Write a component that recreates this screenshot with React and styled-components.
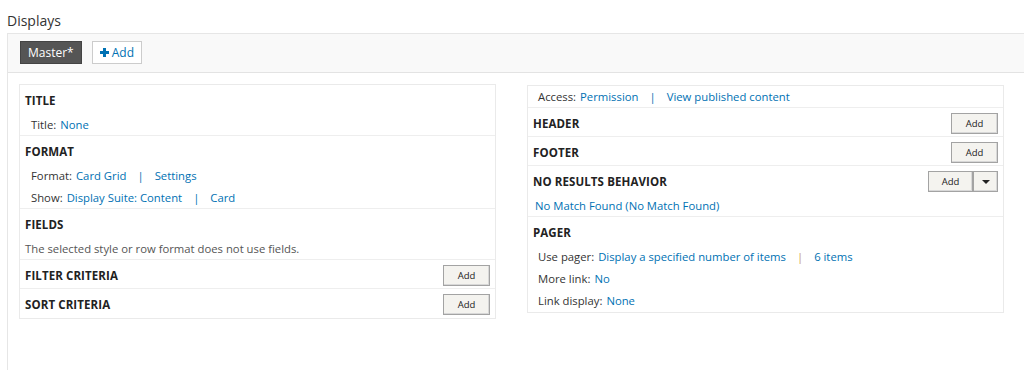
import React from "react";
import styled, { createGlobalStyle } from "styled-components";

const Global = createGlobalStyle`
  html, body { margin: 0; padding: 0; background: #fff; overflow: hidden; }
  body { font-family: "Open Sans", "Noto Sans", sans-serif; color: #333; width: 1024px; height: 370px; }
  * { box-sizing: border-box; }
`;

const Page = styled.div`
  padding: 12px 0 0 7px;
`;

const PageTitle = styled.h2`
  margin: 0 0 4px 0;
  font-size: 14px;
  font-weight: 400;
  line-height: 17px;
  color: #333;
`;

const Wrapper = styled.div`
  width: 1040px;
  height: 400px;
  border: 1px solid #e6e6e6;
  border-right: none;
`;

const TabBar = styled.div`
  background: #f9f9f9;
  border-bottom: 1px solid #e3e3e3;
  height: 39px;
  padding: 7px 0 0 12px;
  display: flex;
  gap: 10px;
  align-items: flex-start;
`;

const Tab = styled.div`
  height: 23px;
  padding: 0 7px;
  display: flex;
  align-items: center;
  font-size: 12px;
  background: ${(p) => (p.$active ? "#555" : "#fff")};
  color: ${(p) => (p.$active ? "#fff" : "#0071b3")};
  border: 1px solid ${(p) => (p.$active ? "#444" : "#ccc")};
  gap: 3px;
`;

const Columns = styled.div`
  display: flex;
  align-items: flex-start;
  gap: 31px;
  padding: 11px 0 0 11px;
`;

const Column = styled.div`
  width: 477px;
  border: 1px solid #eaeaea;
  margin-top: ${(p) => p.$offset || 0}px;
`;

const Section = styled.div`
  padding: ${(p) => (p.$tight ? 0 : 5)}px 5px 0 5px;
  border-top: ${(p) => (p.$first ? "none" : "1px solid #eeeeee")};
  margin-top: ${(p) => (p.$first ? "0" : "-1px")};
`;

const HeadRow = styled.div`
  display: flex;
  align-items: center;
  justify-content: space-between;
  height: 21px;
  margin-bottom: 3px;
`;

const Heading = styled.h3`
  margin: 0;
  font-size: 11.5px;
  font-weight: 700;
  text-transform: uppercase;
  color: #222;
  letter-spacing: 0.1px;
`;

const Items = styled.div`
  margin-top: ${(p) => (p.$top ? 0 : 1)}px;
  padding-left: ${(p) => (p.$indent ?? 6)}px;
`;

const Item = styled.div`
  height: 22px;
  line-height: 22px;
  font-size: 11.3px;
  color: #333;
  white-space: nowrap;
`;

const Label = styled.span`
  color: #333;
  margin-right: 4px;
`;

const Link = styled.a`
  color: #0071b3;
  text-decoration: none;
`;

const Sep = styled.span`
  color: ${(p) => p.$color || "#0071b3"};
  margin: 0 11px;
`;

const Note = styled.div`
  height: 22px;
  line-height: 22px;
  font-size: 11.3px;
  color: #555;
`;

const SmallButton = styled.button`
  height: 21px;
  width: ${(p) => p.$w || 47}px;
  font-family: "Open Sans", "Noto Sans", sans-serif;
  font-size: 9.5px;
  color: #222;
  background: #f4f3ef;
  border: 1px solid #a3a3a3;
  box-shadow: inset -1px -1px 0 #d8d8d8;
  padding: 0;
  cursor: pointer;
`;

const ButtonGroup = styled.div`
  display: flex;
`;

const Caret = styled.span`
  display: inline-block;
  width: 0;
  height: 0;
  border-left: 4px solid transparent;
  border-right: 4px solid transparent;
  border-top: 4px solid #222;
  vertical-align: middle;
`;

const Plus = () => (
  <svg width="9" height="9" viewBox="0 0 9 9">
    <rect x="3" y="0" width="3" height="9" fill="#0071b3" />
    <rect x="0" y="3" width="9" height="3" fill="#0071b3" />
  </svg>
);

export default function App() {
  return (
    <>
      <Global />
      <Page>
        <PageTitle>Displays</PageTitle>
        <Wrapper>
          <TabBar>
            <Tab $active>Master*</Tab>
            <Tab><Plus />Add</Tab>
          </TabBar>
          <Columns>
            <Column>
              <Section $first>
                <HeadRow><Heading>Title</Heading></HeadRow>
                <Items>
                  <Item><Label>Title:</Label><Link>None</Link></Item>
                </Items>
              </Section>
              <Section>
                <HeadRow><Heading>Format</Heading></HeadRow>
                <Items>
                  <Item><Label>Format:</Label><Link>Card Grid</Link><Sep>|</Sep><Link>Settings</Link></Item>
                  <Item><Label>Show:</Label><Link>Display Suite: Content</Link><Sep>|</Sep><Link>Card</Link></Item>
                </Items>
              </Section>
              <Section>
                <HeadRow><Heading>Fields</Heading></HeadRow>
                <Items $indent={0}>
                  <Note>The selected style or row format does not use fields.</Note>
                </Items>
              </Section>
              <Section>
                <HeadRow><Heading>Filter criteria</Heading><SmallButton>Add</SmallButton></HeadRow>
              </Section>
              <Section>
                <HeadRow><Heading>Sort criteria</Heading><SmallButton>Add</SmallButton></HeadRow>
              </Section>
            </Column>
            <Column $offset={1}>
              <Section $first $tight>
                <Items $top $indent={5}>
                  <Item><Label>Access:</Label><Link>Permission</Link><Sep>|</Sep><Link>View published content</Link></Item>
                </Items>
              </Section>
              <Section>
                <HeadRow><Heading>Header</Heading><SmallButton>Add</SmallButton></HeadRow>
              </Section>
              <Section>
                <HeadRow><Heading>Footer</Heading><SmallButton>Add</SmallButton></HeadRow>
              </Section>
              <Section>
                <HeadRow>
                  <Heading>No results behavior</Heading>
                  <ButtonGroup>
                    <SmallButton $w={45}>Add</SmallButton>
                    <SmallButton $w={25}><Caret /></SmallButton>
                  </ButtonGroup>
                </HeadRow>
                <Items $indent={2}>
                  <Item><Link>No Match Found (No Match Found)</Link></Item>
                </Items>
              </Section>
              <Section>
                <HeadRow><Heading>Pager</Heading></HeadRow>
                <Items $indent={5}>
                  <Item><Label>Use pager:</Label><Link>Display a specified number of items</Link><Sep $color="#c8a06a">|</Sep><Link>6 items</Link></Item>
                  <Item><Label>More link:</Label><Link>No</Link></Item>
                  <Item><Label>Link display:</Label><Link>None</Link></Item>
                </Items>
              </Section>
            </Column>
          </Columns>
        </Wrapper>
      </Page>
    </>
  );
}
